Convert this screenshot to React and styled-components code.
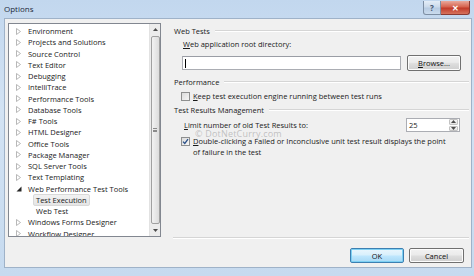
import React from "react";
import styled, { createGlobalStyle } from "styled-components";

const GlobalStyle = createGlobalStyle`
  html, body {
    margin: 0;
    padding: 0;
    background: #c4d8ee;
    overflow: hidden;
  }
  * {
    box-sizing: border-box;
  }
`;

const FONT = `"Open Sans", "Noto Sans", Arial, sans-serif`;

const Window = styled.div`
  width: 474px;
  height: 276px;
  display: flex;
  flex-direction: column;
  background: linear-gradient(180deg, #c2d7ee 0%, #d3e3f4 40%, #c6daef 100%);
  font-family: ${FONT};
  font-size: 7.5px;
  color: #1a1a1a;
  position: relative;
`;

const TitleBar = styled.div`
  height: 18px;
  display: flex;
  align-items: flex-start;
  justify-content: space-between;
  padding: 0 4px 0 4px;
`;

const Title = styled.div`
  font-size: 8px;
  line-height: 18px;
  color: #1e2a3a;
`;

const CaptionButtons = styled.div`
  display: flex;
  margin-top: 1px;
`;

const CaptionButton = styled.div`
  width: ${(p) => p.$w}px;
  height: 14px;
  display: flex;
  align-items: center;
  justify-content: center;
  border: 1px solid ${(p) => (p.$close ? "#8a3a33" : "#7d8ea3")};
  border-top: none;
  border-radius: ${(p) => (p.$close ? "0 0 3px 0" : "0 0 0 3px")};
  border-left: ${(p) => (p.$close ? "none" : undefined)};
  background: ${(p) =>
    p.$close
      ? "linear-gradient(180deg, #e9a99c 0%, #d6634f 45%, #c13b2a 55%, #d6735d 100%)"
      : "linear-gradient(180deg, #e4edf7 0%, #cbdaeb 45%, #b7cbe2 55%, #cbdcee 100%)"};
  color: ${(p) => (p.$close ? "#fff" : "#3f5470")};
  font-size: 8px;
  font-weight: bold;
`;

const Frame = styled.div`
  flex: 1;
  padding: 0 3px 8px 4px;
  display: flex;
`;

const Client = styled.div`
  flex: 1;
  background: #f0f0f0;
  border: 1px solid #9fb2c8;
  display: flex;
  flex-direction: column;
  padding: 4px 2px 0 3px;
`;

const Main = styled.div`
  display: flex;
  gap: 12px;
`;

const Tree = styled.div`
  width: 153px;
  height: 214px;
  background: #fff;
  border: 1px solid #828790;
  display: flex;
  overflow: hidden;
`;

const TreeList = styled.div`
  flex: 1;
  padding-top: 1.5px;
  display: flex;
  flex-direction: column;
`;

const TreeRow = styled.div`
  height: 11.25px;
  flex: none;
  display: flex;
  align-items: center;
  padding-left: ${(p) => (p.$child ? 26 : 7)}px;
  white-space: nowrap;
`;

const Expander = styled.span`
  width: 10px;
  height: 8px;
  display: inline-flex;
  align-items: center;
  justify-content: flex-start;
  flex: none;
  margin-right: 1px;
`;

const ItemText = styled.span`
  padding: 0 2px;
  line-height: 10px;
  border: 1px solid ${(p) => (p.$selected ? "#d9d9d9" : "transparent")};
  background: ${(p) => (p.$selected ? "linear-gradient(180deg, #f2f2f2, #e5e5e5)" : "transparent")};
  border-radius: 2px;
  margin-left: -2px;
`;

const ScrollBar = styled.div`
  width: 11px;
  flex: none;
  background: #ececec;
  border-left: 1px solid #e2e2e2;
  display: flex;
  flex-direction: column;
  align-items: center;
`;

const ScrollArrow = styled.div`
  height: 11px;
  display: flex;
  align-items: center;
  justify-content: center;
  flex: none;
`;

const ScrollThumb = styled.div`
  width: 9px;
  flex: 1;
  margin: 1px 0;
  border: 1px solid #a0a0a0;
  border-radius: 2px;
  background: linear-gradient(90deg, #f2f2f2, #dcdcdc);
  display: flex;
  align-items: center;
  justify-content: center;
`;

const Grip = styled.div`
  width: 4px;
  height: 4px;
  border-top: 1px solid #8a8a8a;
  border-bottom: 1px solid #8a8a8a;
  position: relative;
  &::after {
    content: "";
    position: absolute;
    left: 0;
    right: 0;
    top: 0.5px;
    border-top: 1px solid #8a8a8a;
  }
`;

const Right = styled.div`
  width: 296px;
  height: 215px;
  border-bottom: 1px solid #d5d5d5;
  box-shadow: 0 1px 0 #fff;
  display: flex;
  flex-direction: column;
  position: relative;
`;

const GroupHeader = styled.div`
  height: ${(p) => p.$h || 12}px;
  margin-top: ${(p) => p.$mt || 0}px;
  display: flex;
  align-items: center;
  gap: 5px;
  padding-left: 1px;
  white-space: nowrap;
  &::after {
    content: "";
    flex: 1;
    border-top: 1px solid #d5d5d5;
    border-bottom: 1px solid #fff;
  }
`;

const Label = styled.div`
  height: 12px;
  margin-top: ${(p) => p.$mt || 0}px;
  display: flex;
  align-items: center;
  padding-left: 10px;
  white-space: nowrap;
`;

const Key = styled.span`
  text-decoration: underline;
`;

const InputRow = styled.div`
  height: 16px;
  margin-top: 5px;
  display: flex;
  align-items: center;
  padding-left: 9px;
  gap: 6px;
`;

const TextBox = styled.div`
  width: ${(p) => p.$w}px;
  height: 14px;
  background: #fff;
  border: 1px solid #abadb3;
  border-top-color: #9a9da5;
  display: flex;
  align-items: center;
  padding-left: 2px;
`;

const Caret = styled.div`
  width: 1px;
  height: 9px;
  background: #000;
`;

const Button = styled.div`
  width: ${(p) => p.$w}px;
  height: ${(p) => p.$h || 16}px;
  display: flex;
  align-items: center;
  justify-content: center;
  border: 1px solid ${(p) => (p.$default ? "#3c7fb1" : "#707070")};
  border-radius: 2px;
  background: ${(p) =>
    p.$default
      ? "linear-gradient(180deg, #eaf6fd 0%, #d9f0fc 45%, #bee6fd 55%, #a7d9f5 100%)"
      : "linear-gradient(180deg, #f2f2f2 0%, #ebebeb 45%, #dddddd 55%, #cfcfcf 100%)"};
  box-shadow: inset 0 0 0 1px ${(p) => (p.$default ? "#7ed0f3" : "#fcfcfc")};
  color: #111;
`;

const CheckRow = styled.div`
  margin-top: ${(p) => p.$mt || 0}px;
  display: flex;
  align-items: flex-start;
  padding-left: 8px;
  gap: 3px;
  line-height: 11px;
`;

const CheckBox = styled.div`
  width: 9px;
  height: 9px;
  flex: none;
  margin-top: 1px;
  border: 1px solid #8e8f8f;
  background: linear-gradient(135deg, #dcdcdc, #f6f6f6);
  display: flex;
  align-items: center;
  justify-content: center;
`;

const LimitRow = styled.div`
  height: 14px;
  margin-top: 2px;
  display: flex;
  align-items: center;
  justify-content: space-between;
  padding-left: 11px;
  padding-right: 9px;
`;

const Spinner = styled.div`
  width: 54px;
  height: 14px;
  background: #fff;
  border: 1px solid #abadb3;
  display: flex;
  align-items: center;
  justify-content: space-between;
  padding-left: 2px;
`;

const SpinButtons = styled.div`
  width: 9px;
  height: 12px;
  margin-right: 1px;
  display: flex;
  flex-direction: column;
  gap: 1px;
`;

const SpinButton = styled.div`
  flex: 1;
  border: 1px solid #c2c2c2;
  border-radius: 1px;
  background: linear-gradient(180deg, #f8f8f8, #e4e4e4);
  display: flex;
  align-items: center;
  justify-content: center;
`;

const Watermark = styled.div`
  position: absolute;
  left: 22px;
  top: 104px;
  font-size: 9px;
  color: rgba(150, 150, 150, 0.55);
  letter-spacing: 0.2px;
  pointer-events: none;
  white-space: nowrap;
`;

const Footer = styled.div`
  display: flex;
  justify-content: flex-end;
  gap: 5px;
  padding: 10px 5px 0 0;
`;

const Collapsed = () => (
  <svg width="5" height="7" viewBox="0 0 5 7">
    <path d="M0.5 0.5 L4.5 3.5 L0.5 6.5 Z" fill="#fff" stroke="#a6a6a6" strokeWidth="0.8" />
  </svg>
);

const Expanded = () => (
  <svg width="6" height="6" viewBox="0 0 6 6">
    <path d="M5.5 0.5 L5.5 5.5 L0.5 5.5 Z" fill="#262626" />
  </svg>
);

const Arrow = ({ down }) => (
  <svg width="5" height="3" viewBox="0 0 5 3">
    <path d={down ? "M0 0 L5 0 L2.5 3 Z" : "M0 3 L5 3 L2.5 0 Z"} fill="#4d4d4d" />
  </svg>
);

const Check = () => (
  <svg width="7" height="7" viewBox="0 0 7 7">
    <path d="M1 3.6 L2.8 5.5 L6 1.2" fill="none" stroke="#2a4f87" strokeWidth="1.3" />
  </svg>
);

const treeItems = [
  { label: "Environment" },
  { label: "Projects and Solutions" },
  { label: "Source Control" },
  { label: "Text Editor" },
  { label: "Debugging" },
  { label: "IntelliTrace" },
  { label: "Performance Tools" },
  { label: "Database Tools" },
  { label: "F# Tools" },
  { label: "HTML Designer" },
  { label: "Office Tools" },
  { label: "Package Manager" },
  { label: "SQL Server Tools" },
  { label: "Text Templating" },
  { label: "Web Performance Test Tools", open: true },
  { label: "Test Execution", child: true, selected: true },
  { label: "Web Test", child: true },
  { label: "Windows Forms Designer" },
  { label: "Workflow Designer" },
];

const App = () => (
  <>
    <GlobalStyle />
    <Window>
      <TitleBar>
        <Title>Options</Title>
        <CaptionButtons>
          <CaptionButton $w={18}>?</CaptionButton>
          <CaptionButton $w={29} $close>✕</CaptionButton>
        </CaptionButtons>
      </TitleBar>
      <Frame>
        <Client>
          <Main>
            <Tree>
              <TreeList>
                {treeItems.map((item) => (
                  <TreeRow key={item.label} $child={item.child}>
                    {!item.child && (
                      <Expander>{item.open ? <Expanded /> : <Collapsed />}</Expander>
                    )}
                    <ItemText $selected={item.selected}>{item.label}</ItemText>
                  </TreeRow>
                ))}
              </TreeList>
              <ScrollBar>
                <ScrollArrow>
                  <Arrow />
                </ScrollArrow>
                <ScrollThumb>
                  <Grip />
                </ScrollThumb>
                <ScrollArrow>
                  <Arrow down />
                </ScrollArrow>
              </ScrollBar>
            </Tree>
            <Right>
              <GroupHeader $h={15}>Web Tests</GroupHeader>
              <Label>
                <Key>W</Key>eb application root directory:
              </Label>
              <InputRow>
                <TextBox $w={219}>
                  <Caret />
                </TextBox>
                <Button $w={54}>
                  <Key>B</Key>rowse...
                </Button>
              </InputRow>
              <GroupHeader $mt={5}>Performance</GroupHeader>
              <CheckRow $mt={3}>
                <CheckBox />
                <span>
                  <Key>K</Key>eep test execution engine running between test runs
                </span>
              </CheckRow>
              <GroupHeader $mt={2}>Test Results Management</GroupHeader>
              <LimitRow>
                <span>
                  <Key>L</Key>imit number of old Test Results to:
                </span>
                <Spinner>
                  <span>25</span>
                  <SpinButtons>
                    <SpinButton>
                      <Arrow />
                    </SpinButton>
                    <SpinButton>
                      <Arrow down />
                    </SpinButton>
                  </SpinButtons>
                </Spinner>
              </LimitRow>
              <CheckRow $mt={4}>
                <CheckBox>
                  <Check />
                </CheckBox>
                <span>
                  <Key>D</Key>ouble-clicking a Failed or Inconclusive unit test result displays the point
                  <br />
                  of failure in the test
                </span>
              </CheckRow>
              <Watermark>© DotNetCurry.com</Watermark>
            </Right>
          </Main>
          <Footer>
            <Button $w={54} $h={15} $default>
              OK
            </Button>
            <Button $w={55} $h={15}>
              Cancel
            </Button>
          </Footer>
        </Client>
      </Frame>
    </Window>
  </>
);

export default App;
